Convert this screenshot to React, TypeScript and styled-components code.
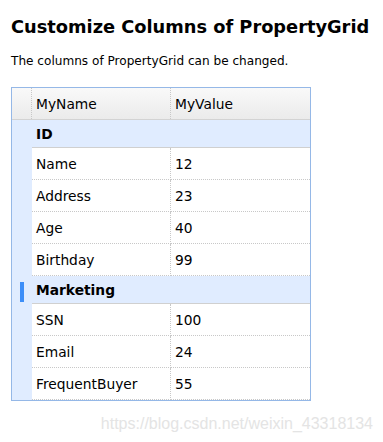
import React from "react";
import styled, { createGlobalStyle } from "styled-components";

const GlobalStyle = createGlobalStyle`
  html, body {
    margin: 0;
    padding: 0;
    background: #ffffff;
  }
  body {
    font-family: "DejaVu Sans", Verdana, sans-serif;
    color: #000;
  }
`;

const Page = styled.div`
  width: 383px;
  height: 442px;
  padding: 16px 0 0 11px;
  box-sizing: border-box;
  position: relative;
  overflow: hidden;
`;

const Title = styled.h2`
  margin: 0;
  font-size: 17.8px;
  font-weight: bold;
  line-height: 22px;
  white-space: nowrap;
`;

const Intro = styled.p`
  margin: 0;
  padding-top: 15px;
  font-size: 12.1px;
  line-height: 16px;
  white-space: nowrap;
`;

const Grid = styled.div`
  margin-top: 18px;
  width: 300px;
  border: 1px solid #95b8e7;
  box-sizing: border-box;
  font-size: 13.8px;
`;

const Row = styled.div<{ $kind?: "head" | "group" | "item" }>`
  display: flex;
  height: ${(p) => (p.$kind === "group" ? 28 : 32)}px;
  background: ${(p) =>
    p.$kind === "head"
      ? "linear-gradient(to bottom, #f9f9f9 0%, #ebebeb 100%)"
      : "#e0ecff"};
  border-bottom: ${(p) => (p.$kind === "head" ? "1px solid #d3d3d3" : "none")};
  box-sizing: border-box;
`;

const Gutter = styled.div<{ $head?: boolean }>`
  width: 20px;
  flex: none;
  position: relative;
  border-right: ${(p) => (p.$head ? "1px dotted #c8c8c8" : "none")};
  box-sizing: border-box;
`;

const Marker = styled.span`
  position: absolute;
  left: 8px;
  top: 6px;
  width: 4px;
  height: 20px;
  background: #3d8ef8;
`;

const Cell = styled.div<{ $w?: number; $item?: boolean; $last?: boolean }>`
  width: ${(p) => (p.$w ? `${p.$w}px` : "auto")};
  flex: ${(p) => (p.$w ? "none" : "1")};
  display: flex;
  align-items: center;
  padding-left: 4px;
  box-sizing: border-box;
  white-space: nowrap;
  background: ${(p) => (p.$item ? "#ffffff" : "transparent")};
  border-right: ${(p) => (p.$last ? "none" : "1px dotted #c8c8c8")};
  border-bottom: ${(p) => (p.$item ? "1px dotted #c8c8c8" : "none")};
`;

const GroupCell = styled.div`
  flex: 1;
  display: flex;
  align-items: center;
  padding-left: 4px;
  font-weight: bold;
  border-bottom: 1px solid #d0d0d0;
  box-sizing: border-box;
`;

const Watermark = styled.div`
  position: absolute;
  right: 10px;
  bottom: 9px;
  font-family: "Liberation Sans", Arial, sans-serif;
  font-size: 16px;
  color: #e4e4e4;
  white-space: nowrap;
`;

type Group = { name: string; selected?: boolean; rows: [string, string][] };

const groups: Group[] = [
  {
    name: "ID",
    rows: [
      ["Name", "12"],
      ["Address", "23"],
      ["Age", "40"],
      ["Birthday", "99"],
    ],
  },
  {
    name: "Marketing",
    selected: true,
    rows: [
      ["SSN", "100"],
      ["Email", "24"],
      ["FrequentBuyer", "55"],
    ],
  },
];

export default function App() {
  return (
    <Page>
      <GlobalStyle />
      <Title>Customize Columns of PropertyGrid</Title>
      <Intro>The columns of PropertyGrid can be changed.</Intro>
      <Grid>
        <Row $kind="head">
          <Gutter $head />
          <Cell $w={139}>MyName</Cell>
          <Cell $last>MyValue</Cell>
        </Row>
        {groups.map((g) => (
          <React.Fragment key={g.name}>
            <Row $kind="group">
              <Gutter>{g.selected && <Marker />}</Gutter>
              <GroupCell>{g.name}</GroupCell>
            </Row>
            {g.rows.map(([k, v]) => (
              <Row $kind="item" key={k}>
                <Gutter />
                <Cell $w={139} $item>
                  {k}
                </Cell>
                <Cell $item $last>
                  {v}
                </Cell>
              </Row>
            ))}
          </React.Fragment>
        ))}
      </Grid>
      <Watermark>https://blog.csdn.net/weixin_43318134</Watermark>
    </Page>
  );
}
